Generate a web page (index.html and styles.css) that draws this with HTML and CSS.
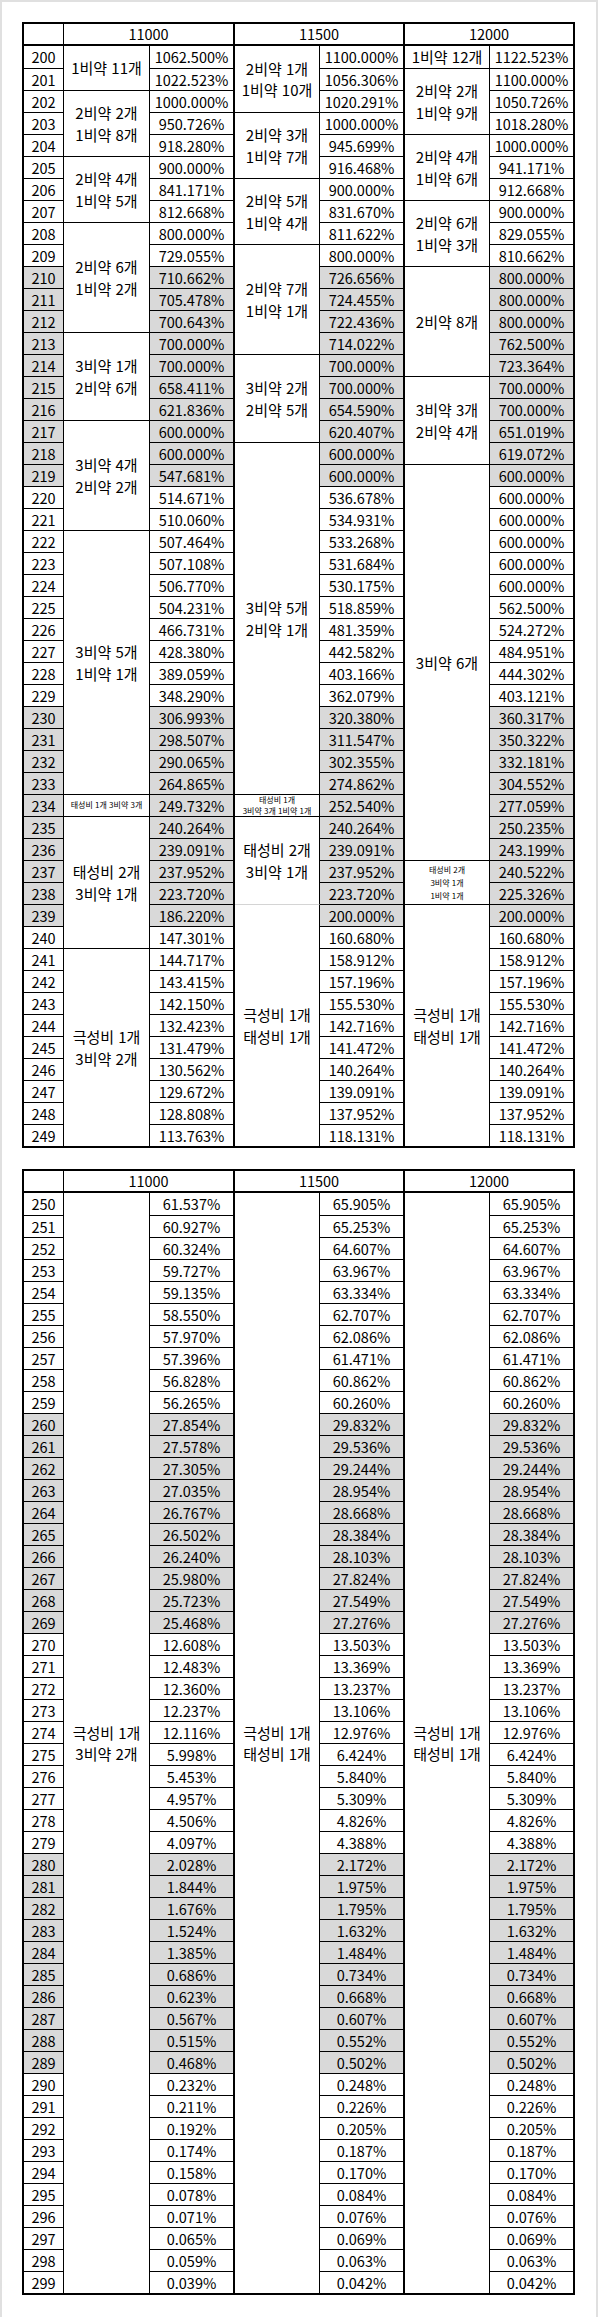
FILE: index.html
```html
<!DOCTYPE html>
<html lang="ko">
<head>
<meta charset="utf-8">
<title>비약 표</title>
<link rel="stylesheet" href="styles.css">
</head>
<body>
<div class="sheet">
<table class="grid">
<colgroup><col class="c-n"><col class="c-l1"><col class="c-v"><col class="c-l"><col class="c-v"><col class="c-l"><col class="c-v"></colgroup>
<thead><tr><th class="corner"></th><th colspan="2">11000</th><th colspan="2">11500</th><th colspan="2">12000</th></tr></thead>
<tbody>
<tr><td class="n">200</td><td class="l" rowspan="2">1비약 11개</td><td class="v">1062.500%</td><td class="l" rowspan="3">2비약 1개<br>1비약 10개</td><td class="v">1100.000%</td><td class="l">1비약 12개</td><td class="v">1122.523%</td></tr>
<tr><td class="n">201</td><td class="v">1022.523%</td><td class="v">1056.306%</td><td class="l" rowspan="3">2비약 2개<br>1비약 9개</td><td class="v">1100.000%</td></tr>
<tr><td class="n">202</td><td class="l" rowspan="3">2비약 2개<br>1비약 8개</td><td class="v">1000.000%</td><td class="v">1020.291%</td><td class="v">1050.726%</td></tr>
<tr><td class="n">203</td><td class="v">950.726%</td><td class="l" rowspan="3">2비약 3개<br>1비약 7개</td><td class="v">1000.000%</td><td class="v">1018.280%</td></tr>
<tr><td class="n">204</td><td class="v">918.280%</td><td class="v">945.699%</td><td class="l" rowspan="3">2비약 4개<br>1비약 6개</td><td class="v">1000.000%</td></tr>
<tr><td class="n">205</td><td class="l" rowspan="3">2비약 4개<br>1비약 5개</td><td class="v">900.000%</td><td class="v">916.468%</td><td class="v">941.171%</td></tr>
<tr><td class="n">206</td><td class="v">841.171%</td><td class="l" rowspan="3">2비약 5개<br>1비약 4개</td><td class="v">900.000%</td><td class="v">912.668%</td></tr>
<tr><td class="n">207</td><td class="v">812.668%</td><td class="v">831.670%</td><td class="l" rowspan="3">2비약 6개<br>1비약 3개</td><td class="v">900.000%</td></tr>
<tr><td class="n">208</td><td class="l" rowspan="5">2비약 6개<br>1비약 2개</td><td class="v">800.000%</td><td class="v">811.622%</td><td class="v">829.055%</td></tr>
<tr><td class="n">209</td><td class="v">729.055%</td><td class="l" rowspan="5">2비약 7개<br>1비약 1개</td><td class="v">800.000%</td><td class="v">810.662%</td></tr>
<tr class="g"><td class="n">210</td><td class="v">710.662%</td><td class="v">726.656%</td><td class="l" rowspan="5">2비약 8개</td><td class="v">800.000%</td></tr>
<tr class="g"><td class="n">211</td><td class="v">705.478%</td><td class="v">724.455%</td><td class="v">800.000%</td></tr>
<tr class="g"><td class="n">212</td><td class="v">700.643%</td><td class="v">722.436%</td><td class="v">800.000%</td></tr>
<tr class="g"><td class="n">213</td><td class="l" rowspan="4">3비약 1개<br>2비약 6개</td><td class="v">700.000%</td><td class="v">714.022%</td><td class="v">762.500%</td></tr>
<tr class="g"><td class="n">214</td><td class="v">700.000%</td><td class="l" rowspan="4">3비약 2개<br>2비약 5개</td><td class="v">700.000%</td><td class="v">723.364%</td></tr>
<tr class="g"><td class="n">215</td><td class="v">658.411%</td><td class="v">700.000%</td><td class="l" rowspan="4">3비약 3개<br>2비약 4개</td><td class="v">700.000%</td></tr>
<tr class="g"><td class="n">216</td><td class="v">621.836%</td><td class="v">654.590%</td><td class="v">700.000%</td></tr>
<tr class="g"><td class="n">217</td><td class="l" rowspan="5">3비약 4개<br>2비약 2개</td><td class="v">600.000%</td><td class="v">620.407%</td><td class="v">651.019%</td></tr>
<tr class="g"><td class="n">218</td><td class="v">600.000%</td><td class="l" rowspan="16">3비약 5개<br>2비약 1개</td><td class="v">600.000%</td><td class="v">619.072%</td></tr>
<tr class="g"><td class="n">219</td><td class="v">547.681%</td><td class="v">600.000%</td><td class="l" rowspan="18">3비약 6개</td><td class="v">600.000%</td></tr>
<tr><td class="n">220</td><td class="v">514.671%</td><td class="v">536.678%</td><td class="v">600.000%</td></tr>
<tr><td class="n">221</td><td class="v">510.060%</td><td class="v">534.931%</td><td class="v">600.000%</td></tr>
<tr><td class="n">222</td><td class="l" rowspan="12">3비약 5개<br>1비약 1개</td><td class="v">507.464%</td><td class="v">533.268%</td><td class="v">600.000%</td></tr>
<tr><td class="n">223</td><td class="v">507.108%</td><td class="v">531.684%</td><td class="v">600.000%</td></tr>
<tr><td class="n">224</td><td class="v">506.770%</td><td class="v">530.175%</td><td class="v">600.000%</td></tr>
<tr><td class="n">225</td><td class="v">504.231%</td><td class="v">518.859%</td><td class="v">562.500%</td></tr>
<tr><td class="n">226</td><td class="v">466.731%</td><td class="v">481.359%</td><td class="v">524.272%</td></tr>
<tr><td class="n">227</td><td class="v">428.380%</td><td class="v">442.582%</td><td class="v">484.951%</td></tr>
<tr><td class="n">228</td><td class="v">389.059%</td><td class="v">403.166%</td><td class="v">444.302%</td></tr>
<tr><td class="n">229</td><td class="v">348.290%</td><td class="v">362.079%</td><td class="v">403.121%</td></tr>
<tr class="g"><td class="n">230</td><td class="v">306.993%</td><td class="v">320.380%</td><td class="v">360.317%</td></tr>
<tr class="g"><td class="n">231</td><td class="v">298.507%</td><td class="v">311.547%</td><td class="v">350.322%</td></tr>
<tr class="g"><td class="n">232</td><td class="v">290.065%</td><td class="v">302.355%</td><td class="v">332.181%</td></tr>
<tr class="g"><td class="n">233</td><td class="v">264.865%</td><td class="v">274.862%</td><td class="v">304.552%</td></tr>
<tr class="g"><td class="n">234</td><td class="l sm">태성비 1개 3비약 3개</td><td class="v">249.732%</td><td class="l sm">태성비 1개<br>3비약 3개 1비약 1개</td><td class="v">252.540%</td><td class="v">277.059%</td></tr>
<tr class="g"><td class="n">235</td><td class="l" rowspan="6">태성비 2개<br>3비약 1개</td><td class="v">240.264%</td><td class="l" rowspan="4">태성비 2개<br>3비약 1개</td><td class="v">240.264%</td><td class="v">250.235%</td></tr>
<tr class="g"><td class="n">236</td><td class="v">239.091%</td><td class="v">239.091%</td><td class="v">243.199%</td></tr>
<tr class="g"><td class="n">237</td><td class="v">237.952%</td><td class="v">237.952%</td><td class="l sm3" rowspan="2">태성비 2개<br>3비약 1개<br>1비약 1개</td><td class="v">240.522%</td></tr>
<tr class="g"><td class="n">238</td><td class="v">223.720%</td><td class="v">223.720%</td><td class="v">225.326%</td></tr>
<tr class="g"><td class="n">239</td><td class="v">186.220%</td><td class="l soft" rowspan="11">극성비 1개<br>태성비 1개</td><td class="v">200.000%</td><td class="l" rowspan="11">극성비 1개<br>태성비 1개</td><td class="v">200.000%</td></tr>
<tr><td class="n">240</td><td class="v">147.301%</td><td class="v">160.680%</td><td class="v">160.680%</td></tr>
<tr><td class="n">241</td><td class="l" rowspan="9">극성비 1개<br>3비약 2개</td><td class="v">144.717%</td><td class="v">158.912%</td><td class="v">158.912%</td></tr>
<tr><td class="n">242</td><td class="v">143.415%</td><td class="v">157.196%</td><td class="v">157.196%</td></tr>
<tr><td class="n">243</td><td class="v">142.150%</td><td class="v">155.530%</td><td class="v">155.530%</td></tr>
<tr><td class="n">244</td><td class="v">132.423%</td><td class="v">142.716%</td><td class="v">142.716%</td></tr>
<tr><td class="n">245</td><td class="v">131.479%</td><td class="v">141.472%</td><td class="v">141.472%</td></tr>
<tr><td class="n">246</td><td class="v">130.562%</td><td class="v">140.264%</td><td class="v">140.264%</td></tr>
<tr><td class="n">247</td><td class="v">129.672%</td><td class="v">139.091%</td><td class="v">139.091%</td></tr>
<tr><td class="n">248</td><td class="v">128.808%</td><td class="v">137.952%</td><td class="v">137.952%</td></tr>
<tr><td class="n">249</td><td class="v">113.763%</td><td class="v">118.131%</td><td class="v">118.131%</td></tr>
</tbody>
</table>

<table class="grid">
<colgroup><col class="c-n"><col class="c-l1"><col class="c-v"><col class="c-l"><col class="c-v"><col class="c-l"><col class="c-v"></colgroup>
<thead><tr><th class="corner"></th><th colspan="2">11000</th><th colspan="2">11500</th><th colspan="2">12000</th></tr></thead>
<tbody>
<tr><td class="n">250</td><td class="l" rowspan="50">극성비 1개<br>3비약 2개</td><td class="v">61.537%</td><td class="l" rowspan="50">극성비 1개<br>태성비 1개</td><td class="v">65.905%</td><td class="l" rowspan="50">극성비 1개<br>태성비 1개</td><td class="v">65.905%</td></tr>
<tr><td class="n">251</td><td class="v">60.927%</td><td class="v">65.253%</td><td class="v">65.253%</td></tr>
<tr><td class="n">252</td><td class="v">60.324%</td><td class="v">64.607%</td><td class="v">64.607%</td></tr>
<tr><td class="n">253</td><td class="v">59.727%</td><td class="v">63.967%</td><td class="v">63.967%</td></tr>
<tr><td class="n">254</td><td class="v">59.135%</td><td class="v">63.334%</td><td class="v">63.334%</td></tr>
<tr><td class="n">255</td><td class="v">58.550%</td><td class="v">62.707%</td><td class="v">62.707%</td></tr>
<tr><td class="n">256</td><td class="v">57.970%</td><td class="v">62.086%</td><td class="v">62.086%</td></tr>
<tr><td class="n">257</td><td class="v">57.396%</td><td class="v">61.471%</td><td class="v">61.471%</td></tr>
<tr><td class="n">258</td><td class="v">56.828%</td><td class="v">60.862%</td><td class="v">60.862%</td></tr>
<tr><td class="n">259</td><td class="v">56.265%</td><td class="v">60.260%</td><td class="v">60.260%</td></tr>
<tr class="g"><td class="n">260</td><td class="v">27.854%</td><td class="v">29.832%</td><td class="v">29.832%</td></tr>
<tr class="g"><td class="n">261</td><td class="v">27.578%</td><td class="v">29.536%</td><td class="v">29.536%</td></tr>
<tr class="g"><td class="n">262</td><td class="v">27.305%</td><td class="v">29.244%</td><td class="v">29.244%</td></tr>
<tr class="g"><td class="n">263</td><td class="v">27.035%</td><td class="v">28.954%</td><td class="v">28.954%</td></tr>
<tr class="g"><td class="n">264</td><td class="v">26.767%</td><td class="v">28.668%</td><td class="v">28.668%</td></tr>
<tr class="g"><td class="n">265</td><td class="v">26.502%</td><td class="v">28.384%</td><td class="v">28.384%</td></tr>
<tr class="g"><td class="n">266</td><td class="v">26.240%</td><td class="v">28.103%</td><td class="v">28.103%</td></tr>
<tr class="g"><td class="n">267</td><td class="v">25.980%</td><td class="v">27.824%</td><td class="v">27.824%</td></tr>
<tr class="g"><td class="n">268</td><td class="v">25.723%</td><td class="v">27.549%</td><td class="v">27.549%</td></tr>
<tr class="g"><td class="n">269</td><td class="v">25.468%</td><td class="v">27.276%</td><td class="v">27.276%</td></tr>
<tr><td class="n">270</td><td class="v">12.608%</td><td class="v">13.503%</td><td class="v">13.503%</td></tr>
<tr><td class="n">271</td><td class="v">12.483%</td><td class="v">13.369%</td><td class="v">13.369%</td></tr>
<tr><td class="n">272</td><td class="v">12.360%</td><td class="v">13.237%</td><td class="v">13.237%</td></tr>
<tr><td class="n">273</td><td class="v">12.237%</td><td class="v">13.106%</td><td class="v">13.106%</td></tr>
<tr><td class="n">274</td><td class="v">12.116%</td><td class="v">12.976%</td><td class="v">12.976%</td></tr>
<tr><td class="n">275</td><td class="v">5.998%</td><td class="v">6.424%</td><td class="v">6.424%</td></tr>
<tr><td class="n">276</td><td class="v">5.453%</td><td class="v">5.840%</td><td class="v">5.840%</td></tr>
<tr><td class="n">277</td><td class="v">4.957%</td><td class="v">5.309%</td><td class="v">5.309%</td></tr>
<tr><td class="n">278</td><td class="v">4.506%</td><td class="v">4.826%</td><td class="v">4.826%</td></tr>
<tr><td class="n">279</td><td class="v">4.097%</td><td class="v">4.388%</td><td class="v">4.388%</td></tr>
<tr class="g"><td class="n">280</td><td class="v">2.028%</td><td class="v">2.172%</td><td class="v">2.172%</td></tr>
<tr class="g"><td class="n">281</td><td class="v">1.844%</td><td class="v">1.975%</td><td class="v">1.975%</td></tr>
<tr class="g"><td class="n">282</td><td class="v">1.676%</td><td class="v">1.795%</td><td class="v">1.795%</td></tr>
<tr class="g"><td class="n">283</td><td class="v">1.524%</td><td class="v">1.632%</td><td class="v">1.632%</td></tr>
<tr class="g"><td class="n">284</td><td class="v">1.385%</td><td class="v">1.484%</td><td class="v">1.484%</td></tr>
<tr class="g"><td class="n">285</td><td class="v">0.686%</td><td class="v">0.734%</td><td class="v">0.734%</td></tr>
<tr class="g"><td class="n">286</td><td class="v">0.623%</td><td class="v">0.668%</td><td class="v">0.668%</td></tr>
<tr class="g"><td class="n">287</td><td class="v">0.567%</td><td class="v">0.607%</td><td class="v">0.607%</td></tr>
<tr class="g"><td class="n">288</td><td class="v">0.515%</td><td class="v">0.552%</td><td class="v">0.552%</td></tr>
<tr class="g"><td class="n">289</td><td class="v">0.468%</td><td class="v">0.502%</td><td class="v">0.502%</td></tr>
<tr><td class="n">290</td><td class="v">0.232%</td><td class="v">0.248%</td><td class="v">0.248%</td></tr>
<tr><td class="n">291</td><td class="v">0.211%</td><td class="v">0.226%</td><td class="v">0.226%</td></tr>
<tr><td class="n">292</td><td class="v">0.192%</td><td class="v">0.205%</td><td class="v">0.205%</td></tr>
<tr><td class="n">293</td><td class="v">0.174%</td><td class="v">0.187%</td><td class="v">0.187%</td></tr>
<tr><td class="n">294</td><td class="v">0.158%</td><td class="v">0.170%</td><td class="v">0.170%</td></tr>
<tr><td class="n">295</td><td class="v">0.078%</td><td class="v">0.084%</td><td class="v">0.084%</td></tr>
<tr><td class="n">296</td><td class="v">0.071%</td><td class="v">0.076%</td><td class="v">0.076%</td></tr>
<tr><td class="n">297</td><td class="v">0.065%</td><td class="v">0.069%</td><td class="v">0.069%</td></tr>
<tr><td class="n">298</td><td class="v">0.059%</td><td class="v">0.063%</td><td class="v">0.063%</td></tr>
<tr><td class="n">299</td><td class="v">0.039%</td><td class="v">0.042%</td><td class="v">0.042%</td></tr>
</tbody>
</table>
</div>
</body>
</html>
```

FILE: styles.css
```css
body {
  margin: 0;
  background: #fff;
  color: #000;
  font-family: "Noto Sans CJK KR", "Noto Sans", sans-serif;
}

.sheet {
  box-sizing: border-box;
  width: 598px;
  min-height: 2317px;
  border-left: 2px solid #e0e0e0;
  border-top: 2px solid #e0e0e0;
  border-right: 2px solid #e0e0e0;
  padding: 20px 0 0 20px;
}

.grid {
  border-collapse: separate;
  border-spacing: 0;
  table-layout: fixed;
  width: 553px;
  border: 2px solid #000;
  border-right: 0;
  font-size: 14.5px;
}

.grid + .grid {
  margin-top: 21px;
}

col.c-n { width: 40px; }
col.c-l1 { width: 86px; }
col.c-l { width: 85px; }
col.c-v { width: 85px; }

th,
td {
  box-sizing: border-box;
  padding: 0;
  text-align: center;
  vertical-align: middle;
  font-weight: normal;
  white-space: nowrap;
  overflow: hidden;
}

thead tr {
  height: 22px;
}

thead th {
  border-bottom: 2px solid #000;
  border-right: 2px solid #000;
  line-height: 20px;
}

thead th.corner {
  border-right-width: 1px;
}

tbody tr {
  height: 22px;
}

tbody td {
  border-top: 1px solid #000;
  line-height: 20px;
}

tbody tr:first-child td {
  border-top: 0;
}

td.n,
td.l {
  border-right: 1px solid #000;
}

td.v {
  border-right: 2px solid #000;
}

td.l {
  font-size: 15px;
  line-height: 21.5px;
}

tr.g td.n,
tr.g td.v {
  background: #d9d9d9;
}

td.l.sm {
  font-size: 8px;
  line-height: 10.5px;
}

td.l.sm3 {
  font-size: 8px;
  line-height: 13px;
}

td.l.soft {
  border-top-color: #d4d4d4;
}
```
